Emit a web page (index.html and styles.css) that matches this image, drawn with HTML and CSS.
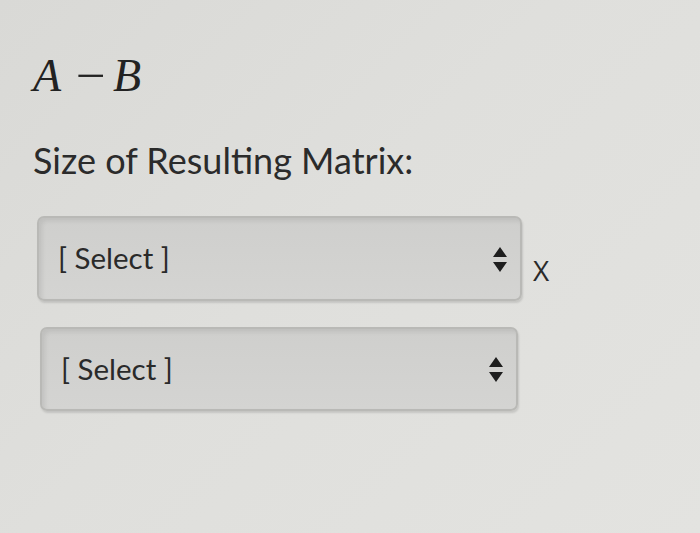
FILE: index.html
```html
<!DOCTYPE html>
<html>
<head>
<meta charset="utf-8">
<link rel="stylesheet" href="styles.css">
</head>
<body>
<main class="question">
  <div class="expr"><i>A</i><span class="minus">−</span><i>B</i></div>
  <p class="prompt">Size of Resulting Matrix:</p>
  <div class="row">
    <div class="select"><span class="label">[ Select ]</span><span class="arrows"><svg viewBox="0 0 16 30" width="16" height="30"><path d="M8 2 L15 12 L1 12 Z M1 17 L15 17 L8 27 Z" fill="#1e1e1e"/></svg></span></div>
    <span class="times">X</span>
  </div>
  <div class="row second">
    <div class="select"><span class="label">[ Select ]</span><span class="arrows"><svg viewBox="0 0 16 30" width="16" height="30"><path d="M8 2 L15 12 L1 12 Z M1 17 L15 17 L8 27 Z" fill="#1e1e1e"/></svg></span></div>
  </div>
</main>
</body>
</html>
```
FILE: styles.css
```css
html, body {
  margin: 0;
  height: 100%;
}
body {
  background: linear-gradient(135deg, #d9d9d6 0%, #dfdfdc 45%, #e3e3e0 100%);
  color: #2a2a2a;
  font-family: Lato, "Open Sans", sans-serif;
}
.question {
  padding: 50px 0 0 33px;
}
.expr {
  font-family: "Liberation Serif", "DejaVu Serif", serif;
  font-size: 46px;
  line-height: 52px;
  color: #222;
}
.expr i {
  font-style: italic;
}
/* wide binary minus, as typeset math draws it */
.minus {
  display: inline-block;
  width: 26px;
  text-align: center;
  transform: scaleX(1.15);
  margin: 0 9px 0 17px;
}
.prompt {
  margin: 35px 0 0 0;
  font-size: 36px;
  line-height: 46px;
  color: #2b2b2b;
}
.row {
  display: flex;
  align-items: flex-start;
  margin-top: 33px;
  margin-left: 4px;
}
.row.second {
  margin-top: 26px;
  margin-left: 7px;
}
.select {
  box-sizing: border-box;
  width: 485px;
  height: 85px;
  display: flex;
  align-items: center;
  justify-content: space-between;
  padding: 0 12px 0 19px;
  background: linear-gradient(180deg, #cfcfcd 0%, #d4d4d2 100%);
  border: 2px solid #b9b9b6;
  border-radius: 7px;
  box-shadow: inset 3px 3px 4px rgba(0,0,0,0.08), 1px 2px 2px rgba(0,0,0,0.12);
}
.row.second .select {
  width: 478px;
  height: 84px;
}
.label {
  font-size: 29.5px;
  color: #2a2a2a;
  padding-bottom: 2px;
}
.arrows {
  display: flex;
  padding-top: 2px;
}
.times {
  font-family: "Open Sans", "Liberation Sans", sans-serif;
  font-size: 28px;
  color: #2a2a2a;
  margin: 35px 0 0 11px;
}
```
